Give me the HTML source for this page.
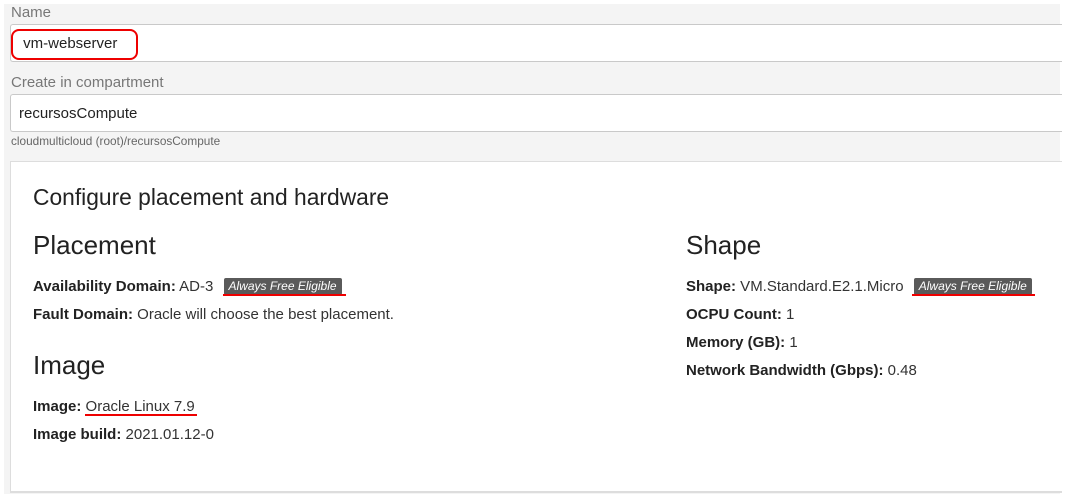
<!DOCTYPE html>
<html><head><meta charset="utf-8"><style>
*{box-sizing:border-box;margin:0;padding:0}
body{width:1068px;height:501px;background:#fff;font-family:"Liberation Sans",Arial,sans-serif;position:relative;overflow:hidden;color:#222}
.bg{position:absolute;left:4px;top:4px;width:1056px;height:490px;background:#f4f4f4}
.lbl{position:absolute;left:11px;font-size:15px;color:#777}
.inp{position:absolute;left:10px;width:1052px;height:38px;background:#fff;border:1px solid #c9c9c9;border-right:none;border-radius:3px 0 0 3px;font-size:15px;color:#222;padding:10px 0 0 8px}
.sub{position:absolute;left:11px;top:134px;font-size:11.8px;color:#666}
.panel{position:absolute;left:10px;top:161px;width:1052px;height:332px;background:#fff;border:1px solid #ddd;border-right:none;border-bottom:2px solid #ddd}
.t{position:absolute;color:#222}
.h1{font-size:22.8px}
.h2{font-size:26px}
.r{font-size:15px;color:#333}
.r b{color:#222}
.badge{display:inline-block;background:#5a5a5a;color:#fff;font-style:italic;font-size:12px;padding:1px 5px 2px;border-radius:2px;margin-left:6px;vertical-align:1px}
.ul{position:absolute;height:2px;background:#e00}
.circ{position:absolute;left:11px;top:29px;width:127px;height:31px;border:2px solid #e00;border-radius:8px}
</style></head><body>
<div class="bg"></div>
<div class="lbl" style="top:4px">Name</div>
<div class="inp" style="top:24px">&nbsp;vm-webserver</div>
<div class="circ"></div>
<div class="lbl" style="top:74px">Create in compartment</div>
<div class="inp" style="top:94px">recursosCompute</div>
<div class="sub">cloudmulticloud (root)/recursosCompute</div>
<div class="panel"></div>
<div class="t h1" style="left:33px;top:184px">Configure placement and hardware</div>
<div class="t h2" style="left:33px;top:230px">Placement</div>
<div class="t r" style="left:33px;top:278px"><b>Availability Domain:</b> AD-3 <span class="badge">Always Free Eligible</span></div>
<div class="ul" style="left:223px;top:294px;width:123px"></div>
<div class="t r" style="left:33px;top:306px"><b>Fault Domain:</b> Oracle will choose the best placement.</div>
<div class="t h2" style="left:33px;top:350px">Image</div>
<div class="t r" style="left:33px;top:398px"><b>Image:</b> Oracle Linux 7.9</div>
<div class="ul" style="left:85px;top:414px;width:112px"></div>
<div class="t r" style="left:33px;top:426px"><b>Image build:</b> 2021.01.12-0</div>
<div class="t h2" style="left:686px;top:230px">Shape</div>
<div class="t r" style="left:686px;top:278px"><b>Shape:</b> VM.Standard.E2.1.Micro <span class="badge">Always Free Eligible</span></div>
<div class="ul" style="left:912px;top:294px;width:123px"></div>
<div class="t r" style="left:686px;top:306px"><b>OCPU Count:</b> 1</div>
<div class="t r" style="left:686px;top:334px"><b>Memory (GB):</b> 1</div>
<div class="t r" style="left:686px;top:362px"><b>Network Bandwidth (Gbps):</b> 0.48</div>
</body></html>
